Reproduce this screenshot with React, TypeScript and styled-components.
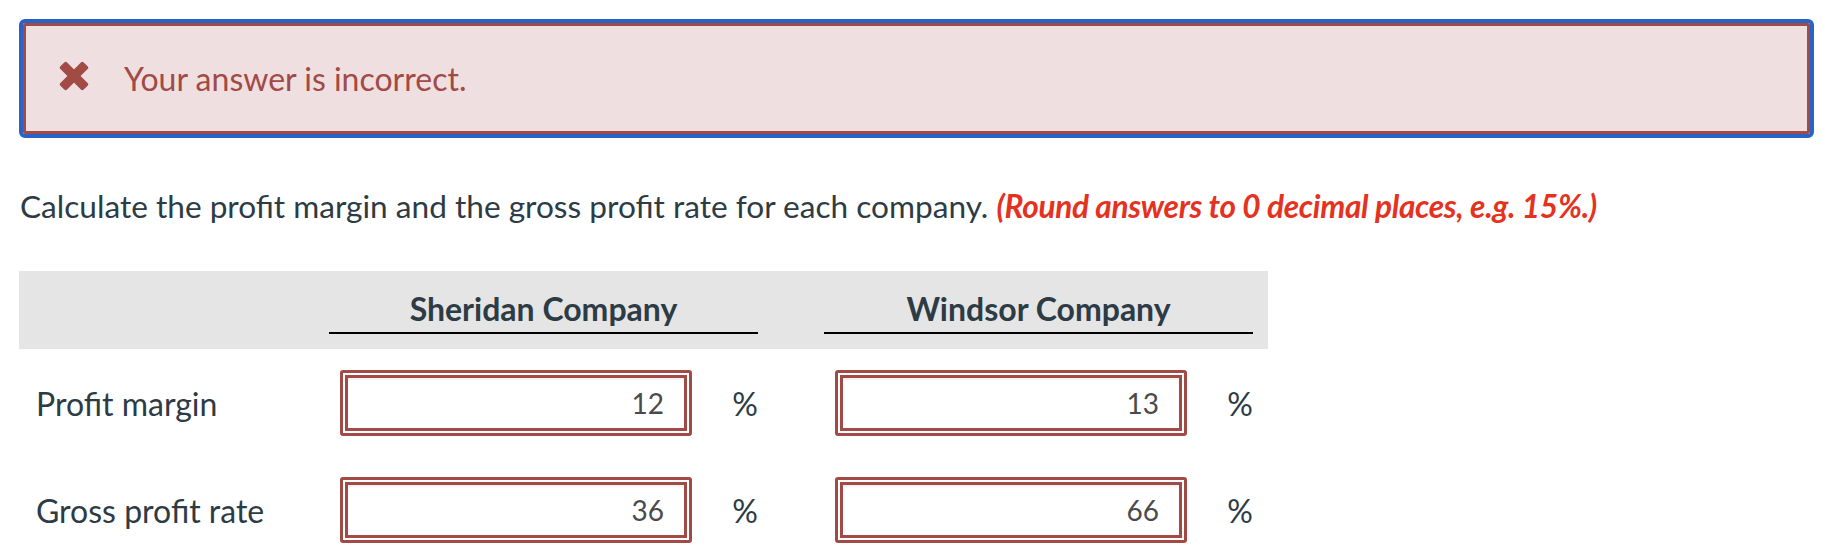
import styled, { createGlobalStyle } from 'styled-components';

const GlobalStyle = createGlobalStyle`
  html, body {
    margin: 0;
    padding: 0;
    background: #ffffff;
  }
  body {
    font-family: 'Lato', 'Liberation Sans', sans-serif;
    color: #2d3b45;
  }
`;

const Page = styled.div`
  width: 1822px;
  height: 548px;
  overflow: hidden;
  padding: 19px 8px 0 19px;
  box-sizing: border-box;
`;

const AlertFocus = styled.div`
  border: 4px solid #2a63c8;
  border-radius: 6px;
`;

const Alert = styled.div`
  display: flex;
  align-items: center;
  gap: 35px;
  height: 105px;
  padding-left: 33px;
  background: #f0dfe0;
  border: 3px solid #a24a45;
  border-radius: 2px;
  color: #a24a45;
  font-size: 32px;
`;

const AlertIcon = styled.svg`
  width: 30px;
  height: 30px;
  margin-top: -6px;
  flex: none;
`;

const Instruction = styled.p`
  margin: 50px 0 0 1px;
  font-size: 31.6px;
  line-height: 36px;
`;

const Hint = styled.em`
  color: #e5321f;
  font-weight: 700;
  font-style: italic;
  letter-spacing: -0.3px;
`;

const Table = styled.div`
  margin-top: 47px;
  width: 1249px;
`;

const Columns = styled.div`
  display: grid;
  grid-template-columns: 244px 429px 429px;
  column-gap: 66px;
`;

const HeadRow = styled(Columns)`
  align-items: end;
  height: 78px;
  padding-bottom: 15px;
  box-sizing: border-box;
  background: #e5e5e5;
`;

const HeadCell = styled.div`
  text-align: center;
  font-size: 32px;
  font-weight: 700;
  line-height: 36px;
  padding-bottom: 5px;
  border-bottom: 2px solid #000000;
`;

const BodyRow = styled(Columns)<{ $first?: boolean }>`
  align-items: center;
  margin-top: ${(p) => (p.$first ? '21px' : '41px')};
`;

const RowLabel = styled.div`
  padding-left: 17px;
  font-size: 32px;
  white-space: nowrap;
`;

const Cell = styled.div`
  display: flex;
  align-items: center;
  padding-left: 11px;
`;

const InputFrame = styled.div`
  width: 352px;
  height: 66px;
  box-sizing: border-box;
  padding: 2px;
  border: 3px solid #a24a45;
  border-radius: 3px;
  background: #ffffff;
`;

const AnswerInput = styled.input`
  width: 100%;
  height: 100%;
  box-sizing: border-box;
  border: 3px solid #a24a45;
  box-shadow: inset 0 2px 2px rgba(0, 0, 0, 0.06);
  padding: 0 20px 0 10px;
  text-align: right;
  font-family: 'Lato', 'Liberation Sans', sans-serif;
  font-size: 28px;
  color: #4a4a4a;
  background: #ffffff;
  outline: none;
`;

const Unit = styled.span`
  margin-left: auto;
  font-size: 32px;
`;

const rows = [
  { label: 'Profit margin', values: ['12', '13'] },
  { label: 'Gross profit rate', values: ['36', '66'] },
];

export default function App() {
  return (
    <>
      <GlobalStyle />
      <Page>
        <AlertFocus>
          <Alert>
            <AlertIcon viewBox="0 0 30 30">
              <rect x="-1.5" y="10.25" width="33" height="9.5" rx="2" fill="#a24a45" transform="rotate(45 15 15)" />
              <rect x="-1.5" y="10.25" width="33" height="9.5" rx="2" fill="#a24a45" transform="rotate(-45 15 15)" />
            </AlertIcon>
            <span>Your answer is incorrect.</span>
          </Alert>
        </AlertFocus>

        <Instruction>
          Calculate the profit margin and the gross profit rate for each company.{' '}
          <Hint>(Round answers to 0 decimal places, e.g. 15%.)</Hint>
        </Instruction>

        <Table>
          <HeadRow>
            <div />
            <HeadCell>Sheridan Company</HeadCell>
            <HeadCell>Windsor Company</HeadCell>
          </HeadRow>
          {rows.map((row, i) => (
            <BodyRow key={row.label} $first={i === 0}>
              <RowLabel>{row.label}</RowLabel>
              {row.values.map((v, j) => (
                <Cell key={j}>
                  <InputFrame>
                    <AnswerInput defaultValue={v} readOnly />
                  </InputFrame>
                  <Unit>%</Unit>
                </Cell>
              ))}
            </BodyRow>
          ))}
        </Table>
      </Page>
    </>
  );
}
